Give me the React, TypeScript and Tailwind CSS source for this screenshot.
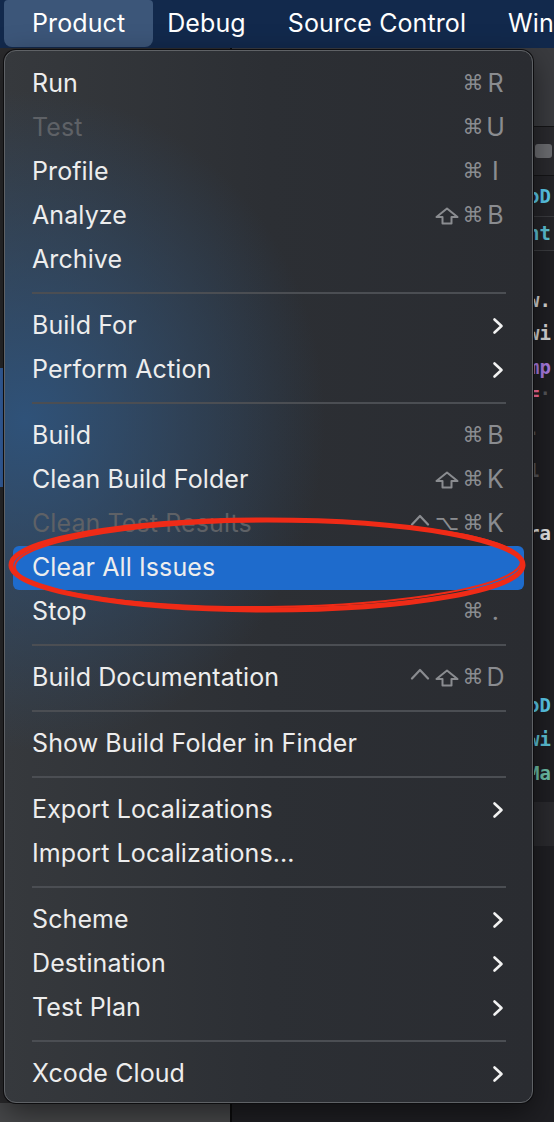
import React from "react";

type Keys = { ctrl?: boolean; opt?: boolean; shift?: boolean; cmd?: boolean; key: string };

type Item =
  | { sep: true }
  | { label: string; keys?: Keys; disabled?: boolean; sub?: boolean; active?: boolean };

const items: Item[] = [
  { label: "Run", keys: { cmd: true, key: "R" } },
  { label: "Test", keys: { cmd: true, key: "U" }, disabled: true },
  { label: "Profile", keys: { cmd: true, key: "I" } },
  { label: "Analyze", keys: { shift: true, cmd: true, key: "B" } },
  { label: "Archive" },
  { sep: true },
  { label: "Build For", sub: true },
  { label: "Perform Action", sub: true },
  { sep: true },
  { label: "Build", keys: { cmd: true, key: "B" } },
  { label: "Clean Build Folder", keys: { shift: true, cmd: true, key: "K" } },
  { label: "Clean Test Results", keys: { ctrl: true, opt: true, cmd: true, key: "K" }, disabled: true },
  { label: "Clear All Issues", active: true },
  { label: "Stop", keys: { cmd: true, key: "." } },
  { sep: true },
  { label: "Build Documentation", keys: { ctrl: true, shift: true, cmd: true, key: "D" } },
  { sep: true },
  { label: "Show Build Folder in Finder" },
  { sep: true },
  { label: "Export Localizations", sub: true },
  { label: "Import Localizations..." },
  { sep: true },
  { label: "Scheme", sub: true },
  { label: "Destination", sub: true },
  { label: "Test Plan", sub: true },
  { sep: true },
  { label: "Xcode Cloud", sub: true },
];

const sym = "font-['DejaVu_Sans',sans-serif] text-[21px]";
const grey = "#8a8c90";

function ShiftIcon() {
  return (
    <svg width="24" height="18" viewBox="0 0 24 18">
      <path d="M12 1.5 L22.5 10 H16.5 V16.5 H7.5 V10 H1.5 Z" fill="none" stroke={grey} strokeWidth="2" strokeLinejoin="round" />
    </svg>
  );
}

function CtrlIcon() {
  return (
    <svg width="20" height="12" viewBox="0 0 20 12" className="mb-[8px]">
      <path d="M2 10.5 L10 2 L18 10.5" fill="none" stroke={grey} strokeWidth="2.2" strokeLinecap="round" strokeLinejoin="round" />
    </svg>
  );
}

function Shortcut({ k }: { k: Keys }) {
  return (
    <div className="flex items-center text-[#8a8c90]">
      {k.ctrl && (
        <span className="w-[26px] flex justify-center">
          <CtrlIcon />
        </span>
      )}
      {k.opt && <span className={`w-[28px] text-center ${sym}`}>⌥</span>}
      {k.shift && (
        <span className="w-[28px] flex justify-center">
          <ShiftIcon />
        </span>
      )}
      {k.cmd && <span className={`w-[24px] text-center ${sym}`}>⌘</span>}
      <span className="w-[21px] text-center">{k.key}</span>
    </div>
  );
}

function Chevron() {
  return (
    <svg width="12" height="18" viewBox="0 0 12 18" className="mr-[2px]">
      <path d="M2.5 2.5 L9.5 9 L2.5 15.5" fill="none" stroke="#f2f2f2" strokeWidth="2.6" strokeLinecap="round" strokeLinejoin="round" />
    </svg>
  );
}

function MenuRow({ item }: { item: Item }) {
  if ("sep" in item) {
    return (
      <div className="h-[22px] flex items-center">
        <div className="h-[2px] ml-[19px] mr-[18px] flex-1 bg-[#4b4e53]" />
      </div>
    );
  }
  return (
    <div
      className={`h-[44px] flex items-center justify-between pl-[19px] pr-[18px] rounded-[6px] ${
        item.active ? "bg-[#1e6bcc]" : ""
      }`}
    >
      <span className={item.disabled ? "text-[#5e6166]" : "text-[#ededed]"}>{item.label}</span>
      {item.keys && <Shortcut k={item.keys} />}
      {item.sub && <Chevron />}
    </div>
  );
}

function CodeLine({ h, children, cls }: { h: string; children?: React.ReactNode; cls?: string }) {
  return <div className={`${h} flex items-center pl-[296px] whitespace-nowrap ${cls ?? ""}`}>{children}</div>;
}

export default function App() {
  return (
    <div className="w-[554px] h-[1122px] relative overflow-hidden bg-[#1f1f23] font-['Inter','Liberation_Sans',sans-serif] text-[25px] tracking-[0.1px]">
      {/* macOS menu bar */}
      <div className="h-[48px] flex items-center bg-[#12294c] text-white whitespace-nowrap overflow-hidden">
        <div className="ml-[4px] h-[47px] self-start px-[28px] flex items-center rounded-b-[8px] rounded-t-[4px] bg-[#3c5679]">
          Product
        </div>
        <div className="ml-[14px]">Debug</div>
        <div className="ml-[42px]">Source Control</div>
        <div className="ml-[42px]">Win</div>
      </div>

      {/* window behind the menu */}
      <div className="flex h-[1074px]">
        <div className="w-[230px] shrink-0 flex flex-col bg-[#2b2b2d]">
          <div className="h-[320px]" />
          <div className="h-[119px] bg-[#3a6ab0]" />
          <div className="flex-1" />
          <div className="h-[19px] bg-[#47484a]" />
        </div>
        <div className="w-[2px] shrink-0 bg-[#0c0c0d]" />
        <div className="flex-1 min-w-0 overflow-hidden flex flex-col font-['DejaVu_Sans_Mono',monospace] text-[19px] font-semibold">
          <div className="h-[79px] bg-[#3a3b3f] border-b border-[#151517]" />
          <div className="h-[49px] bg-[#2a2a2e] border-b border-[#151517] flex items-center pl-[303px]">
            <div className="w-[17px] h-[14px] rounded-[3px] bg-[#6c6d71]" />
          </div>
          <CodeLine h="h-[41px] bg-[#242428] border-b border-[#3a3b3f]" cls="text-[#5ccdf0]">
            oD
          </CodeLine>
          <CodeLine h="h-[34px] bg-[#242428] border-b border-[#3a3b3f]" cls="text-[#5dc3d8]">
            nt
          </CodeLine>
          <div className="h-[33px]" />
          <CodeLine h="h-[32px]" cls="text-[#d6d6d6]">w.</CodeLine>
          <CodeLine h="h-[34px]" cls="text-[#d6d6d6]">wi</CodeLine>
          <CodeLine h="h-[34px]" cls="text-[#a97ce2]">mp</CodeLine>
          <CodeLine h="h-[18px]" cls="text-[#ff6f9c]">
            =<span className="text-[#55565a]">·</span>
          </CodeLine>
          <div className="h-[19px]" />
          <CodeLine h="h-[24px]" cls="text-[#55565a]"> ·</CodeLine>
          <div className="h-[13px]" />
          <CodeLine h="h-[24px]" cls="text-[#55565a]">1</CodeLine>
          <div className="h-[39px]" />
          <CodeLine h="h-[24px]" cls="text-[#e6e6e6]">ra</CodeLine>
          <div className="h-[143px]" />
          <CodeLine h="h-[34px]" cls="text-[#5ccdf0]">oD</CodeLine>
          <CodeLine h="h-[34px]" cls="text-[#5dc3d8]">wi</CodeLine>
          <CodeLine h="h-[34px]" cls="text-[#6dbfa8]">Ma</CodeLine>
          <div className="h-[12px]" />
          <div className="h-[44px] bg-[#2a2a2e]" />
          <div className="flex-1" />
        </div>
      </div>

      {/* Product dropdown menu */}
      <div className="absolute left-[4px] top-[50px] w-[529px] h-[1053px] rounded-[12px] border border-[#5f6266] shadow-[0_0_0_1px_#0d0d0f,0_10px_30px_rgba(0,0,0,0.5)] bg-[radial-gradient(ellipse_300px_330px_at_20px_370px,#2f5279,rgba(47,82,121,0)),linear-gradient(90deg,#36393d,#2c2f34_50%,#2a2c31)] pt-[11px] px-[8px] flex flex-col">
        {items.map((it, i) => (
          <MenuRow key={i} item={it} />
        ))}
      </div>

      {/* red hand-drawn circle */}
      <svg className="absolute left-0 top-[505px] pointer-events-none" width="540" height="120" viewBox="0 0 540 120">
        <ellipse cx="267" cy="60" rx="256" ry="45" fill="none" stroke="#ef2b17" strokeWidth="5" />
        <ellipse cx="268" cy="59" rx="253" ry="43" fill="none" stroke="#ef2b17" strokeWidth="2" transform="rotate(-0.6 268 59)" />
      </svg>
    </div>
  );
}
